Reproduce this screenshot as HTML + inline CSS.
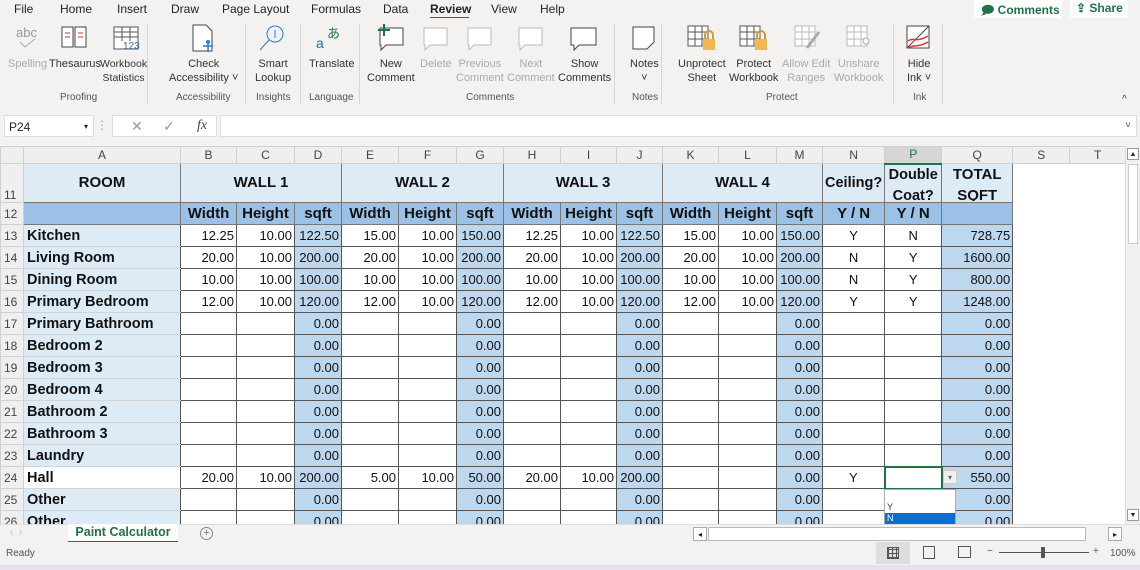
<!DOCTYPE html>
<html><head><meta charset="utf-8"><style>
*{box-sizing:border-box;margin:0;padding:0}
body{width:1140px;height:570px;overflow:hidden;background:#fff;font-family:"Liberation Sans",sans-serif;position:relative;color:#222}
.abs{position:absolute}
#tabs{left:0;top:0;width:1140px;height:20px;background:#f3f2f1;font-size:12px}
#tabs span{position:absolute;top:2px}
#ribbon{left:0;top:18px;width:1140px;height:90px;background:#f3f2f1;font-size:11px;color:#333}
.btn{position:absolute;top:39px;text-align:center;line-height:14px;font-size:11px}
.dis{color:#aaa}
.grp{position:absolute;top:74px;font-size:10px;color:#555;text-align:center}
.sep{position:absolute;top:6px;width:1px;height:80px;background:#d6d6d6}
.ic{position:absolute;top:6px}
#fb{left:0;top:108px;width:1140px;height:38px;background:#f3f2f1}
table{border-collapse:collapse;table-layout:fixed;position:absolute;left:0;top:146px}
tr{height:22px}
td{height:22px;line-height:20px;border:1px solid #d4d4d4;font-size:13px;padding:0 2px;white-space:nowrap;overflow:hidden;text-align:right;color:#111}
tr.h{height:17px}
tr.h td{height:17px;line-height:15px;background:#efefef;color:#444;text-align:center;font-size:12px;border-color:#d0d0d0}
td.rh{background:#efefef;color:#444;font-size:12px;text-align:left;padding-left:3px;border-color:#d0d0d0}
.t td.g{border-color:#555}
td.a{background:#ddebf7;font-weight:bold;font-size:14.5px;text-align:left;padding-left:3px;border-left:1px solid #555;border-right:1px solid #555}
td.s{background:#bdd7ee}
td.c{text-align:center}
tr.r11{height:39px}
tr.r11 td{height:39px}
.hd{background:#ddebf7;font-weight:bold;font-size:15px;text-align:center;border:1px solid #777}
.hd div{height:37px;overflow:hidden;line-height:21px}
.sh{background:#9bc2e6;font-weight:bold;font-size:15px;text-align:center;border:1px solid #777}
td.w{border-color:#fff}
</style></head><body>
<div id="tabs" class="abs">
<span style="left:14px">File</span><span style="left:60px">Home</span><span style="left:117px">Insert</span><span style="left:171px">Draw</span><span style="left:222px">Page Layout</span><span style="left:311px">Formulas</span><span style="left:383px">Data</span><span style="left:430px;font-weight:bold;color:#222">Review</span><span style="left:491px">View</span><span style="left:540px">Help</span>
<div class="abs" style="left:430px;top:17px;width:39px;height:3px;background:#217346"></div>
<div class="abs" style="left:974px;top:0;width:88px;height:18px;background:#fff;color:#217346;font-weight:bold;font-size:12px;padding:1px 0 0 7px">🗩 Comments</div>
<div class="abs" style="left:1070px;top:0;width:58px;height:18px;background:#fff;color:#217346;font-weight:bold;font-size:12px;padding:1px 0 0 6px">⇪ Share</div>
</div>
<div id="ribbon" class="abs">
<svg class="ic" style="left:14px" width="28" height="28"><text x="2" y="13" font-size="13" fill="#999" font-family="Liberation Sans">abc</text><path d="M6 18l5 5 10-8" stroke="#aaa" fill="none"/></svg>
<svg class="ic" style="left:60px" width="28" height="26"><path d="M2 3h11v20H2zM15 3h11v20H15z" stroke="#444" fill="#fff"/><path d="M5 9h5M5 13h5M18 9h5M18 13h5" stroke="#c33"/></svg>
<svg class="ic" style="left:112px" width="28" height="28"><path d="M2 3h24v22H2z" stroke="#555" fill="#fff"/><path d="M2 8h24M10 3v14M18 3v14M2 13h24" stroke="#555"/><text x="11" y="25" font-size="10" fill="#2a6ab8">123</text></svg>
<div class="btn dis" style="left:8px">Spelling</div><div class="btn" style="left:49px">Thesaurus</div><div class="btn" style="left:100px;font-size:10.5px">Workbook<br>Statistics</div>
<div class="grp" style="left:60px">Proofing</div><div class="sep" style="left:147px"></div>
<svg class="ic" style="left:190px" width="28" height="30"><path d="M3 1h13l6 6v20H3z" stroke="#444" fill="#fff"/><circle cx="18" cy="18" r="2" fill="#2a7ad0"/><path d="M13 22h10M18 20v8" stroke="#2a7ad0" stroke-width="1.5"/></svg>
<div class="btn" style="left:169px">Check<br>Accessibility ˅</div><div class="grp" style="left:176px">Accessibility</div><div class="sep" style="left:245px"></div>
<svg class="ic" style="left:258px" width="28" height="28"><circle cx="17" cy="10" r="8" stroke="#2a7ad0" fill="none"/><path d="M11 16L2 26M17 6v8" stroke="#2a7ad0"/></svg>
<div class="btn" style="left:255px">Smart<br>Lookup</div><div class="grp" style="left:256px">Insights</div><div class="sep" style="left:300px"></div>
<svg class="ic" style="left:315px" width="28" height="28"><text x="1" y="24" font-size="14" fill="#2a6ab8">a</text><text x="12" y="14" font-size="13" fill="#217346">あ</text></svg>
<div class="btn" style="left:309px">Translate</div><div class="grp" style="left:309px">Language</div><div class="sep" style="left:359px"></div>
<svg class="ic" style="left:376px" width="30" height="28"><path d="M4 4h23v17H10l-5 5v-5H4z" stroke="#444" fill="#fff"/><path d="M8 0v12M2 6h12" stroke="#217346" stroke-width="2"/></svg>
<svg class="ic" style="left:420px" width="30" height="28"><path d="M4 4h23v17H10l-5 5v-5H4z" stroke="#bbb" fill="#fff"/></svg>
<svg class="ic" style="left:464px" width="30" height="28"><path d="M4 4h23v17H10l-5 5v-5H4z" stroke="#bbb" fill="#fff"/></svg>
<svg class="ic" style="left:515px" width="30" height="28"><path d="M4 4h23v17H10l-5 5v-5H4z" stroke="#bbb" fill="#fff"/></svg>
<svg class="ic" style="left:569px" width="30" height="28"><path d="M2 4h25v17H10l-5 5v-5H2z" stroke="#444" fill="#fff"/></svg>
<div class="btn" style="left:367px">New<br>Comment</div><div class="btn dis" style="left:420px">Delete</div><div class="btn dis" style="left:456px">Previous<br>Comment</div><div class="btn dis" style="left:507px">Next<br>Comment</div><div class="btn" style="left:558px">Show<br>Comments</div>
<div class="grp" style="left:466px">Comments</div><div class="sep" style="left:614px"></div>
<svg class="ic" style="left:630px" width="28" height="28"><path d="M3 3h21v15l-7 7H3z" stroke="#444" fill="#fff"/></svg>
<div class="btn" style="left:630px">Notes<br>˅</div><div class="grp" style="left:632px">Notes</div><div class="sep" style="left:661px"></div>
<svg class="ic" style="left:686px" width="34" height="30"><path d="M2 2h20v20H2zM2 8h20M9 2v20M16 2v20M2 15h20" stroke="#555" fill="#fff"/><rect x="17" y="15" width="12" height="11" fill="#f2b84b"/><path d="M19 15v-4a4 4 0 018 0v4" stroke="#d69a2b" fill="none" stroke-width="2"/></svg>
<svg class="ic" style="left:738px" width="34" height="30"><path d="M2 2h20v20H2zM2 8h20M9 2v20M16 2v20M2 15h20" stroke="#555" fill="#fff"/><rect x="17" y="15" width="12" height="11" fill="#f2b84b"/><path d="M19 15v-4a4 4 0 018 0v4" stroke="#d69a2b" fill="none" stroke-width="2"/></svg>
<svg class="ic" style="left:793px" width="34" height="30"><path d="M2 2h20v20H2zM2 8h20M9 2v20M16 2v20M2 15h20" stroke="#bbb" fill="#fff"/><path d="M14 24l12-16" stroke="#aaa" stroke-width="3"/></svg>
<svg class="ic" style="left:845px" width="34" height="30"><path d="M2 2h20v20H2zM2 8h20M9 2v20M16 2v20M2 15h20" stroke="#bbb" fill="#fff"/><circle cx="21" cy="17" r="3" stroke="#aaa" fill="#fff"/></svg>
<div class="btn" style="left:678px">Unprotect<br>Sheet</div><div class="btn" style="left:729px">Protect<br>Workbook</div><div class="btn dis" style="left:782px">Allow Edit<br>Ranges</div><div class="btn dis" style="left:834px">Unshare<br>Workbook</div>
<div class="grp" style="left:766px">Protect</div><div class="sep" style="left:893px"></div>
<svg class="ic" style="left:905px" width="28" height="28"><path d="M2 2h22v22H2z" stroke="#444" fill="#fff"/><path d="M2 24L24 2" stroke="#444"/><path d="M3 17c5-4 8 2 20-5M3 24c5-4 10 0 20-6" stroke="#d33" fill="none" stroke-width="1.5"/></svg>
<div class="btn" style="left:907px">Hide<br>Ink ˅</div><div class="grp" style="left:913px">Ink</div><div class="sep" style="left:942px"></div>
<div class="abs" style="left:1122px;top:76px;font-size:10px">^</div>
</div>
<div id="fb" class="abs">
<div class="abs" style="left:4px;top:7px;width:90px;height:22px;background:#fff;border:1px solid #ddd;font-size:12px;padding:4px 4px">P24<span style="position:absolute;right:5px;font-size:8px;top:6px">▾</span></div>
<div class="abs" style="left:96px;top:10px;color:#aaa;font-size:12px">⋮</div>
<div class="abs" style="left:112px;top:7px;width:105px;height:22px;background:#fff;border:1px solid #ddd;color:#999;font-size:14px;white-space:nowrap"><span class="abs" style="left:18px;top:2px">✕</span><span class="abs" style="left:50px;top:2px">✓</span><i class="abs" style="left:84px;top:2px;font-family:'Liberation Serif';color:#444">fx</i></div>
<div class="abs" style="left:220px;top:7px;width:917px;height:22px;background:#fff;border:1px solid #ddd"><span style="position:absolute;right:5px;top:4px;font-size:10px;color:#555">˅</span></div>
</div>
<table class="t">
<colgroup><col style="width:23px"><col style="width:157px"><col style="width:56px"><col style="width:58px"><col style="width:47px"><col style="width:57px"><col style="width:58px"><col style="width:47px"><col style="width:57px"><col style="width:56px"><col style="width:46px"><col style="width:56px"><col style="width:58px"><col style="width:46px"><col style="width:62px"><col style="width:57px"><col style="width:71px"><col style="width:57px"><col style="width:56px"></colgroup>
<tr class="h"><td style="background:#efefef"></td><td>A</td><td>B</td><td>C</td><td>D</td><td>E</td><td>F</td><td>G</td><td>H</td><td>I</td><td>J</td><td>K</td><td>L</td><td>M</td><td>N</td><td style="background:#d6d6d6;color:#217346;border-bottom:2px solid #217346">P</td><td>Q</td><td>S</td><td>T</td></tr>
<tr class="r11"><td class="rh" style="vertical-align:bottom;line-height:14px">11</td><td class="hd">ROOM</td><td class="hd" colspan="3">WALL 1</td><td class="hd" colspan="3">WALL 2</td><td class="hd" colspan="3">WALL 3</td><td class="hd" colspan="3">WALL 4</td><td class="hd" style="font-size:14.5px">Ceiling?</td><td class="hd" style="font-size:14.5px;vertical-align:top"><div>Double<br>Coat?</div></td><td class="hd" style="vertical-align:top"><div>TOTAL<br>SQFT</div></td><td class="w"></td><td class="w"></td></tr>
<tr><td class="rh">12</td><td class="sh"></td><td class="sh">Width</td><td class="sh">Height</td><td class="sh">sqft</td><td class="sh">Width</td><td class="sh">Height</td><td class="sh">sqft</td><td class="sh">Width</td><td class="sh">Height</td><td class="sh">sqft</td><td class="sh">Width</td><td class="sh">Height</td><td class="sh">sqft</td><td class="sh">Y / N</td><td class="sh">Y / N</td><td class="sh"></td><td class="w"></td><td class="w"></td></tr>
<tr><td class="rh">13</td><td class="a">Kitchen</td><td class="g">12.25</td><td class="g">10.00</td><td class="g s">122.50</td><td class="g">15.00</td><td class="g">10.00</td><td class="g s">150.00</td><td class="g">12.25</td><td class="g">10.00</td><td class="g s">122.50</td><td class="g">15.00</td><td class="g">10.00</td><td class="g s">150.00</td><td class="g c">Y</td><td class="g c">N</td><td class="g s">728.75</td><td class="w"></td><td class="w"></td></tr>
<tr><td class="rh">14</td><td class="a">Living Room</td><td class="g">20.00</td><td class="g">10.00</td><td class="g s">200.00</td><td class="g">20.00</td><td class="g">10.00</td><td class="g s">200.00</td><td class="g">20.00</td><td class="g">10.00</td><td class="g s">200.00</td><td class="g">20.00</td><td class="g">10.00</td><td class="g s">200.00</td><td class="g c">N</td><td class="g c">Y</td><td class="g s">1600.00</td><td class="w"></td><td class="w"></td></tr>
<tr><td class="rh">15</td><td class="a">Dining Room</td><td class="g">10.00</td><td class="g">10.00</td><td class="g s">100.00</td><td class="g">10.00</td><td class="g">10.00</td><td class="g s">100.00</td><td class="g">10.00</td><td class="g">10.00</td><td class="g s">100.00</td><td class="g">10.00</td><td class="g">10.00</td><td class="g s">100.00</td><td class="g c">N</td><td class="g c">Y</td><td class="g s">800.00</td><td class="w"></td><td class="w"></td></tr>
<tr><td class="rh">16</td><td class="a">Primary Bedroom</td><td class="g">12.00</td><td class="g">10.00</td><td class="g s">120.00</td><td class="g">12.00</td><td class="g">10.00</td><td class="g s">120.00</td><td class="g">12.00</td><td class="g">10.00</td><td class="g s">120.00</td><td class="g">12.00</td><td class="g">10.00</td><td class="g s">120.00</td><td class="g c">Y</td><td class="g c">Y</td><td class="g s">1248.00</td><td class="w"></td><td class="w"></td></tr>
<tr><td class="rh">17</td><td class="a">Primary Bathroom</td><td class="g"></td><td class="g"></td><td class="g s">0.00</td><td class="g"></td><td class="g"></td><td class="g s">0.00</td><td class="g"></td><td class="g"></td><td class="g s">0.00</td><td class="g"></td><td class="g"></td><td class="g s">0.00</td><td class="g"></td><td class="g"></td><td class="g s">0.00</td><td class="w"></td><td class="w"></td></tr>
<tr><td class="rh">18</td><td class="a">Bedroom 2</td><td class="g"></td><td class="g"></td><td class="g s">0.00</td><td class="g"></td><td class="g"></td><td class="g s">0.00</td><td class="g"></td><td class="g"></td><td class="g s">0.00</td><td class="g"></td><td class="g"></td><td class="g s">0.00</td><td class="g"></td><td class="g"></td><td class="g s">0.00</td><td class="w"></td><td class="w"></td></tr>
<tr><td class="rh">19</td><td class="a">Bedroom 3</td><td class="g"></td><td class="g"></td><td class="g s">0.00</td><td class="g"></td><td class="g"></td><td class="g s">0.00</td><td class="g"></td><td class="g"></td><td class="g s">0.00</td><td class="g"></td><td class="g"></td><td class="g s">0.00</td><td class="g"></td><td class="g"></td><td class="g s">0.00</td><td class="w"></td><td class="w"></td></tr>
<tr><td class="rh">20</td><td class="a">Bedroom 4</td><td class="g"></td><td class="g"></td><td class="g s">0.00</td><td class="g"></td><td class="g"></td><td class="g s">0.00</td><td class="g"></td><td class="g"></td><td class="g s">0.00</td><td class="g"></td><td class="g"></td><td class="g s">0.00</td><td class="g"></td><td class="g"></td><td class="g s">0.00</td><td class="w"></td><td class="w"></td></tr>
<tr><td class="rh">21</td><td class="a">Bathroom 2</td><td class="g"></td><td class="g"></td><td class="g s">0.00</td><td class="g"></td><td class="g"></td><td class="g s">0.00</td><td class="g"></td><td class="g"></td><td class="g s">0.00</td><td class="g"></td><td class="g"></td><td class="g s">0.00</td><td class="g"></td><td class="g"></td><td class="g s">0.00</td><td class="w"></td><td class="w"></td></tr>
<tr><td class="rh">22</td><td class="a">Bathroom 3</td><td class="g"></td><td class="g"></td><td class="g s">0.00</td><td class="g"></td><td class="g"></td><td class="g s">0.00</td><td class="g"></td><td class="g"></td><td class="g s">0.00</td><td class="g"></td><td class="g"></td><td class="g s">0.00</td><td class="g"></td><td class="g"></td><td class="g s">0.00</td><td class="w"></td><td class="w"></td></tr>
<tr><td class="rh">23</td><td class="a">Laundry</td><td class="g"></td><td class="g"></td><td class="g s">0.00</td><td class="g"></td><td class="g"></td><td class="g s">0.00</td><td class="g"></td><td class="g"></td><td class="g s">0.00</td><td class="g"></td><td class="g"></td><td class="g s">0.00</td><td class="g"></td><td class="g"></td><td class="g s">0.00</td><td class="w"></td><td class="w"></td></tr>
<tr><td class="rh">24</td><td class="a" style="background:#fff">Hall</td><td class="g">20.00</td><td class="g">10.00</td><td class="g s">200.00</td><td class="g">5.00</td><td class="g">10.00</td><td class="g s">50.00</td><td class="g">20.00</td><td class="g">10.00</td><td class="g s">200.00</td><td class="g"></td><td class="g"></td><td class="g s">0.00</td><td class="g c">Y</td><td class="g" style="border:2px solid #217346"></td><td class="g s">550.00</td><td class="w"></td><td class="w"></td></tr>
<tr><td class="rh">25</td><td class="a">Other</td><td class="g"></td><td class="g"></td><td class="g s">0.00</td><td class="g"></td><td class="g"></td><td class="g s">0.00</td><td class="g"></td><td class="g"></td><td class="g s">0.00</td><td class="g"></td><td class="g"></td><td class="g s">0.00</td><td class="g"></td><td class="g"></td><td class="g s">0.00</td><td class="w"></td><td class="w"></td></tr>
<tr><td class="rh">26</td><td class="a">Other</td><td class="g"></td><td class="g"></td><td class="g s">0.00</td><td class="g"></td><td class="g"></td><td class="g s">0.00</td><td class="g"></td><td class="g"></td><td class="g s">0.00</td><td class="g"></td><td class="g"></td><td class="g s">0.00</td><td class="g"></td><td class="g"></td><td class="g s">0.00</td><td class="w"></td><td class="w"></td></tr>
</table>
<div class="abs" style="left:943px;top:470px;width:14px;height:14px;background:#f0f0f0;border:1px solid #ccc;font-size:8px;text-align:center;line-height:13px;color:#666">▾</div>
<div class="abs" style="left:884px;top:489px;width:72px;height:35px;background:#fff;border:1px solid #aaa;font-size:9px;color:#333"><div style="position:absolute;top:12px;left:2px">Y</div><div style="position:absolute;top:23px;left:0;width:70px;height:12px;background:#0a6ed1;color:#fff;padding-left:2px">N</div></div>
<div class="abs" style="left:1125px;top:146px;width:15px;height:378px;background:#f0f0f0;border-left:1px solid #ddd"><div style="position:absolute;top:2px;left:1px;width:12px;height:12px;border:1px solid #999;background:#fff;font-size:7px;text-align:center;line-height:11px">▲</div><div style="position:absolute;top:18px;left:2px;width:10px;height:80px;background:#fff;border:1px solid #ccc"></div><div style="position:absolute;top:363px;left:1px;width:12px;height:12px;border:1px solid #999;background:#fff;font-size:7px;text-align:center;line-height:11px">▼</div></div>
<div class="abs" style="left:0;top:524px;width:1140px;height:18px;background:#f3f2f1;border-top:1px solid #ddd">
<div class="abs" style="left:10px;top:2px;font-size:10px;color:#bbb">‹ &nbsp;›</div>
<div class="abs" style="left:68px;top:-1px;width:110px;height:19px;background:#fff;border-bottom:2px solid #217346;color:#217346;font-weight:bold;font-size:12.5px;text-align:center;line-height:17px">Paint Calculator</div>
<div class="abs" style="left:200px;top:2px;width:13px;height:13px;border:1px solid #888;border-radius:50%;font-size:11px;line-height:11px;text-align:center;color:#777">+</div>
<div class="abs" style="left:693px;top:2px;width:14px;height:14px;border:1px solid #aaa;background:#fff;font-size:8px;text-align:center;line-height:13px">◂</div>
<div class="abs" style="left:708px;top:2px;width:378px;height:14px;border:1px solid #bbb;background:#fff"></div>
<div class="abs" style="left:1108px;top:2px;width:14px;height:14px;border:1px solid #aaa;background:#fff;font-size:8px;text-align:center;line-height:13px">▸</div>
</div>
<div class="abs" style="left:0;top:542px;width:1140px;height:23px;background:#f3f2f1;font-size:10px;color:#555">
<div class="abs" style="left:6px;top:6px">Ready</div>
<div class="abs" style="left:876px;top:0;width:34px;height:22px;background:#ddd"></div>
<div class="abs" style="left:887px;top:5px;width:12px;height:12px;border:1px solid #555;background:repeating-linear-gradient(90deg,#555 0 1px,transparent 1px 4px),repeating-linear-gradient(0deg,#555 0 1px,transparent 1px 4px)"></div>
<div class="abs" style="left:923px;top:4px;width:12px;height:13px;border:1px solid #555"></div>
<div class="abs" style="left:958px;top:4px;width:13px;height:12px;border:1px solid #555"></div>
<div class="abs" style="left:987px;top:4px">−</div>
<div class="abs" style="left:999px;top:10px;width:90px;height:1px;background:#555"></div>
<div class="abs" style="left:1041px;top:5px;width:4px;height:11px;background:#555"></div>
<div class="abs" style="left:1093px;top:4px">+</div>
<div class="abs" style="left:1110px;top:6px">100%</div>
</div>
<div class="abs" style="left:0;top:565px;width:1140px;height:5px;background:#e9dff0"></div>
</body></html>
